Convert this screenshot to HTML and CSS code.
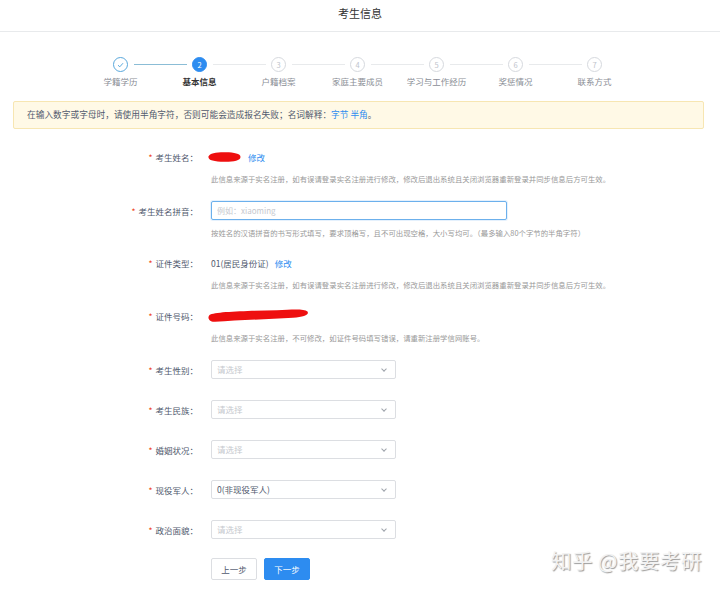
FILE: index.html
```html
<!DOCTYPE html>
<html lang="zh-CN">
<head>
    <meta charset="UTF-8">
    <meta name="viewport" content="width=device-width, initial-scale=1.0">
    <title>考生信息</title>
    <link rel="stylesheet" href="styles.css">
</head>
<body>
    <div class="page-title">考生信息</div>

    <ol class="steps">
        <li class="step done">
            <span class="dot"><svg width="7" height="6" viewBox="0 0 7 6"><path d="M1 3.2 L2.8 4.8 L6 1.2" fill="none" stroke="#4a9fd8" stroke-width="0.9"/></svg></span>
            <span class="name">学籍学历</span>
        </li>
        <li class="step active">
            <span class="dot">2</span>
            <span class="name">基本信息</span>
        </li>
        <li class="step">
            <span class="dot">3</span>
            <span class="name">户籍档案</span>
        </li>
        <li class="step">
            <span class="dot">4</span>
            <span class="name">家庭主要成员</span>
        </li>
        <li class="step">
            <span class="dot">5</span>
            <span class="name">学习与工作经历</span>
        </li>
        <li class="step">
            <span class="dot">6</span>
            <span class="name">奖惩情况</span>
        </li>
        <li class="step">
            <span class="dot">7</span>
            <span class="name">联系方式</span>
        </li>
    </ol>

    <div class="notice">在输入数字或字母时，请使用半角字符，否则可能会造成报名失败；名词解释：<a class="link">字节</a> <a class="link">半角</a>。</div>

    <form class="form" onsubmit="event.preventDefault();">
        <div class="item item-1">
            <div class="row">
                <label class="label"><i>*</i>考生姓名：</label>
                <div class="value">
                    <svg class="mark" width="35" height="12" viewBox="0 0 35 12"><path d="M1.5 5.5 C2.5 2 10 1 19 1.2 C27 1.4 33.5 2.5 33.5 6 C33.5 9.5 26 11 17 10.8 C8 10.6 0.5 9.5 1.5 5.5 Z" fill="#ee0f0f"/></svg>
                    <a class="link">修改</a>
                </div>
            </div>
            <div class="hint">此信息来源于实名注册，如有误请登录实名注册进行修改，修改后退出系统且关闭浏览器重新登录并同步信息后方可生效。</div>
        </div>

        <div class="item item-2">
            <div class="row">
                <label class="label" for="pinyin"><i>*</i>考生姓名拼音：</label>
                <div class="value">
                    <input class="text-input" id="pinyin" type="text" placeholder="例如：xiaoming">
                </div>
            </div>
            <div class="hint">按姓名的汉语拼音的书写形式填写，要求顶格写，且不可出现空格，大小写均可。（最多输入80个字节的半角字符）</div>
        </div>

        <div class="item item-3">
            <div class="row">
                <label class="label"><i>*</i>证件类型：</label>
                <div class="value">
                    <span>01(居民身份证)</span>
                    <a class="link">修改</a>
                </div>
            </div>
            <div class="hint">此信息来源于实名注册，如有误请登录实名注册进行修改，修改后退出系统且关闭浏览器重新登录并同步信息后方可生效。</div>
        </div>

        <div class="item item-4">
            <div class="row">
                <label class="label"><i>*</i>证件号码：</label>
                <div class="value">
                    <svg class="mark" width="104" height="15" viewBox="0 0 104 15"><path d="M2.5 7 C8 3.5 40 3 70 2.2 C86 1.6 97 0.8 100.5 3.5 C102.5 7 97 9 86 9.8 C60 11 30 12.5 8 13.8 C2 14.2 0 9.5 2.5 7 Z" fill="#ee0f0f"/></svg>
                </div>
            </div>
            <div class="hint">此信息来源于实名注册，不可修改，如证件号码填写错误，请重新注册学信网账号。</div>
        </div>

        <div class="item select-item">
            <div class="row">
                <label class="label"><i>*</i>考生性别：</label>
                <div class="value"><div class="select placeholder">请选择</div></div>
            </div>
        </div>
        <div class="item select-item">
            <div class="row">
                <label class="label"><i>*</i>考生民族：</label>
                <div class="value"><div class="select placeholder">请选择</div></div>
            </div>
        </div>
        <div class="item select-item">
            <div class="row">
                <label class="label"><i>*</i>婚姻状况：</label>
                <div class="value"><div class="select placeholder">请选择</div></div>
            </div>
        </div>
        <div class="item select-item">
            <div class="row">
                <label class="label"><i>*</i>现役军人：</label>
                <div class="value"><div class="select">0(非现役军人)</div></div>
            </div>
        </div>
        <div class="item select-item last">
            <div class="row">
                <label class="label"><i>*</i>政治面貌：</label>
                <div class="value"><div class="select placeholder">请选择</div></div>
            </div>
        </div>

        <div class="buttons">
            <button type="button" class="btn">上一步</button>
            <button type="submit" class="btn btn-primary">下一步</button>
        </div>
    </form>

    <div class="watermark">知乎 @我要考研</div>
</body>
</html>
```

FILE: styles.css
```css
body {
    margin: 0;
    padding: 0;
    background-color: #fff;
    font-family: "Noto Sans CJK SC", "Noto Sans", sans-serif;
    color: #515a6e;
    width: 720px;
    height: 593px;
    position: relative;
    overflow: hidden;
}

.page-title {
    height: 31px;
    line-height: 27px;
    text-align: center;
    font-size: 11px;
    color: #333;
    border-bottom: 1px solid #e8eaec;
}

.steps {
    list-style: none;
    margin: 25px 0 0 81px;
    padding: 0;
    display: flex;
}

.step {
    width: 79px;
    display: flex;
    flex-direction: column;
    align-items: center;
    position: relative;
}

.step + .step::before {
    content: "";
    position: absolute;
    top: 7px;
    left: -26px;
    width: 53px;
    height: 1px;
    background-color: #e8eaec;
}

.step.active::before {
    background-color: #8bbdd6;
}

.dot {
    width: 15px;
    height: 15px;
    box-sizing: border-box;
    border: 1px solid #d6d9de;
    border-radius: 50%;
    display: flex;
    justify-content: center;
    align-items: center;
    font-size: 7.5px;
    color: #c0c4cc;
    background-color: #fff;
}

.step.done .dot {
    border-color: #5aa8dc;
}

.step.active .dot {
    border-color: #2d8cf0;
    background-color: #2d8cf0;
    color: #fff;
}

.name {
    margin-top: 3px;
    line-height: 12px;
    font-size: 8.5px;
    color: #8a8e96;
    white-space: nowrap;
}

.step.active .name {
    color: #333;
    font-weight: bold;
}

.notice {
    margin: 14px 16px 0 13px;
    height: 28px;
    box-sizing: border-box;
    padding-left: 13px;
    line-height: 26px;
    font-size: 8.7px;
    color: #515a6e;
    background-color: #fff9e6;
    border: 1px solid #f7e6b2;
    border-radius: 2px;
}

.link {
    color: #2d8cf0;
    text-decoration: none;
    cursor: pointer;
}

.form {
    margin-top: 18px;
}

.row {
    display: flex;
    align-items: center;
    height: 19px;
}

.label {
    width: 198px;
    text-align: right;
    font-size: 8.5px;
    color: #515a6e;
    flex-shrink: 0;
}

.label i {
    font-style: normal;
    color: #ed4014;
    margin-right: 3px;
}

.value {
    margin-left: 13px;
    display: flex;
    align-items: center;
    gap: 6px;
    font-size: 8.5px;
    color: #515a6e;
}

.mark {
    margin-left: -4px;
}

.hint {
    margin: 7px 0 0 211px;
    line-height: 11px;
    font-size: 7.4px;
    color: #999;
    white-space: nowrap;
}

.item-1 { margin-bottom: 17px; }
.item-2 { margin-bottom: 15px; }
.item-3 { margin-bottom: 16px; }
.item-4 { margin-bottom: 17px; }

.select-item { margin-bottom: 21px; }
.select-item.last { margin-bottom: 19px; }

.text-input {
    width: 296px;
    height: 19px;
    box-sizing: border-box;
    padding: 0 5px;
    border: 1px solid #6cb0ec;
    border-radius: 2px;
    box-shadow: 0 0 0 1px rgba(45, 140, 240, 0.12);
    font-family: inherit;
    font-size: 8px;
    outline: none;
}

.text-input::placeholder {
    color: #c5c8ce;
}

.select {
    width: 185px;
    height: 19px;
    box-sizing: border-box;
    padding: 0 5px;
    line-height: 17px;
    border: 1px solid #dcdee2;
    border-radius: 2px;
    font-size: 8.5px;
    color: #515a6e;
    position: relative;
}

.select.placeholder {
    color: #c5c8ce;
}

.select::after {
    content: "";
    position: absolute;
    right: 9px;
    top: 6px;
    width: 3px;
    height: 3px;
    border-right: 1px solid #9ea3ab;
    border-bottom: 1px solid #9ea3ab;
    transform: rotate(45deg);
}

.buttons {
    margin-left: 211px;
    display: flex;
    gap: 7px;
}

.btn {
    width: 46px;
    height: 22px;
    padding: 0;
    font-family: inherit;
    font-size: 8.5px;
    color: #515a6e;
    background-color: #fff;
    border: 1px solid #dcdee2;
    border-radius: 2px;
    cursor: pointer;
}

.btn-primary {
    color: #fff;
    background-color: #2d8cf0;
    border-color: #2d8cf0;
}

.watermark {
    position: absolute;
    right: 18px;
    bottom: 18px;
    font-size: 20.5px;
    letter-spacing: 0.5px;
    color: #f2f2f2;
    text-shadow: 1px 1px 1px #9a9a9a, -0.5px -0.5px 0 #fff;
    white-space: nowrap;
}
```
